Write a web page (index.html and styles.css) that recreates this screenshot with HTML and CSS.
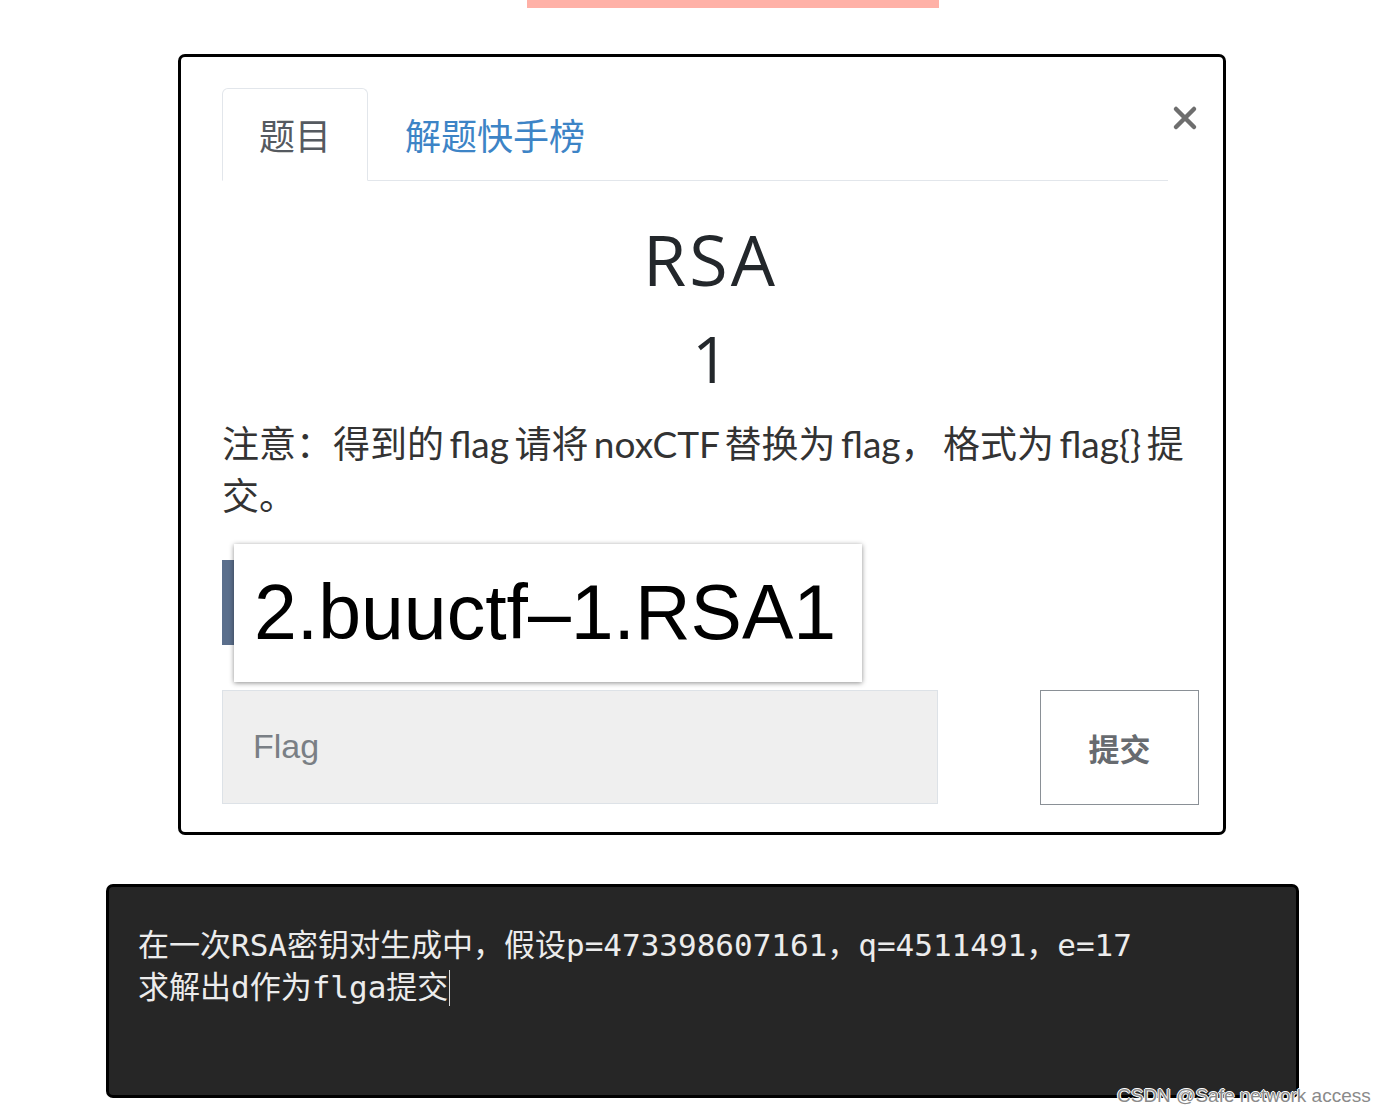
FILE: index.html
```html
<!DOCTYPE html>
<html lang="zh">

<head>
    <meta charset="UTF-8">
    <title>RSA1</title>
    <link rel="stylesheet" href="styles.css">
</head>

<body>
    <div class="top-bar"></div>

    <div class="modal">
        <button class="modal-close" type="button" aria-label="关闭">
            <svg width="26" height="26" viewBox="0 0 26 26">
                <path d="M4 4 L22 22 M22 4 L4 22" stroke="#6e6e6e" stroke-width="4.5" stroke-linecap="round" />
            </svg>
        </button>

        <ul class="tabs">
            <li class="tab active">题目</li>
            <li class="tab">解题快手榜</li>
        </ul>

        <h2 class="challenge-name">RSA</h2>
        <div class="challenge-score">1</div>

        <p class="challenge-desc">注意：得到的 flag 请将 noxCTF 替换为 flag， 格式为 flag{} 提交。</p>

        <div class="tag-row">
            <span class="tag"></span>
            <div class="caption-box">2.buuctf–1.RSA1</div>
        </div>

        <form class="submit-row" onsubmit="return false">
            <input class="flag-input" placeholder="Flag">
            <button class="btn-submit" type="submit">提交</button>
        </form>
    </div>

    <div class="console">
        <p>在一次RSA密钥对生成中，假设p=473398607161，q=4511491，e=17</p>
        <p>求解出d作为flga提交<span class="caret"></span></p>
    </div>

    <div class="watermark">CSDN @Safe network access</div>
</body>

</html>
```

FILE: styles.css
```css
:root {
    --tab-border: #e2e6eb;
    --link-color: #3d84c6;
    --text-color: #333;
    --muted: #7a7f85;
}

* {
    box-sizing: border-box;
}

body {
    margin: 0;
    background: white;
    font-family: Lato, "Noto Sans CJK SC", sans-serif;
    color: var(--text-color);
    position: relative;
    min-height: 1114px;
}

.top-bar {
    width: 412px;
    height: 8px;
    margin-left: 527px;
    background-color: #ffb1a7;
}

.modal {
    position: relative;
    width: 1048px;
    margin: 46px 0 0 178px;
    padding: 31px 24px 27px 41px;
    border: 3px solid #000;
    border-radius: 7px;
}

.modal-close {
    position: absolute;
    top: 48px;
    right: 25px;
    padding: 0;
    border: none;
    background: none;
    line-height: 0;
    cursor: pointer;
}

/* 选项卡 */
.tabs {
    display: flex;
    margin: 0 31px 0 0;
    padding: 0;
    list-style: none;
    border-bottom: 1px solid var(--tab-border);
}

.tab {
    padding: 23px 36px 24px;
    margin-bottom: -1px;
    font-family: "Noto Sans CJK SC", sans-serif;
    font-size: 36px;
    line-height: 44px;
    color: var(--link-color);
    border: 1px solid transparent;
    border-radius: 6px 6px 0 0;
}

.tab.active {
    color: #555a60;
    border-color: var(--tab-border);
    border-bottom-color: white;
    background: white;
}

.challenge-name {
    margin: 36px 0 0;
    text-align: center;
    font-family: "Open Sans", sans-serif;
    font-size: 70px;
    font-weight: 400;
    letter-spacing: 3px;
    line-height: 1.2;
    color: #23272b;
}

.challenge-score {
    margin-top: 20px;
    text-align: center;
    font-family: "Open Sans", sans-serif;
    font-size: 64px;
    font-weight: 400;
    line-height: 1.2;
    color: #23272b;
}

.challenge-desc {
    margin: 20px 0 0;
    font-size: 37px;
    line-height: 52px;
    word-spacing: -4px;
    color: #333;
}

.tag-row {
    position: relative;
    height: 85px;
    margin-top: 38px;
}

.tag {
    display: block;
    width: 40px;
    height: 100%;
    background-color: #5b6f8c;
}

.caption-box {
    position: absolute;
    left: 12px;
    top: -16px;
    width: 628px;
    height: 138px;
    padding-left: 20px;
    display: flex;
    align-items: center;
    background: white;
    box-shadow: 0 1px 5px rgba(0, 0, 0, 0.45);
    font-family: "Liberation Sans", Arial, sans-serif;
    font-size: 77px;
    color: #000;
}

.submit-row {
    display: flex;
    justify-content: space-between;
    align-items: flex-start;
    margin-top: 45px;
}

.flag-input {
    width: 716px;
    height: 114px;
    padding: 0 30px;
    border: 1px solid #dde2e7;
    background-color: #efefef;
    font-family: "Liberation Sans", Arial, sans-serif;
    font-size: 34px;
    color: var(--text-color);
}

.flag-input::placeholder {
    color: var(--muted);
}

.btn-submit {
    width: 159px;
    height: 115px;
    border: 1px solid #8a9096;
    background: white;
    font-family: "Noto Sans CJK SC", sans-serif;
    font-size: 31px;
    font-weight: 700;
    color: #676b70;
    cursor: pointer;
}

/* 代码区 */
.console {
    width: 1193px;
    height: 214px;
    margin: 49px 0 0 106px;
    padding: 37px 29px;
    background-color: #262626;
    border: 3px solid #000;
    border-radius: 7px;
    font-family: "DejaVu Sans Mono", "Noto Sans CJK SC", monospace;
    font-size: 31px;
    line-height: 42px;
    color: #ececec;
}

.console p {
    margin: 0;
}

.caret {
    display: inline-block;
    width: 1px;
    height: 36px;
    margin-left: 1px;
    vertical-align: -8px;
    background: #ddd;
}

.watermark {
    position: absolute;
    left: 1117px;
    top: 1085px;
    font-family: "Liberation Sans", Arial, sans-serif;
    font-size: 19px;
    color: #8a8a8a;
    text-shadow: -1px 0 white, 1px 0 white, 0 -1px white, 0 1px white;
    white-space: nowrap;
}
```
